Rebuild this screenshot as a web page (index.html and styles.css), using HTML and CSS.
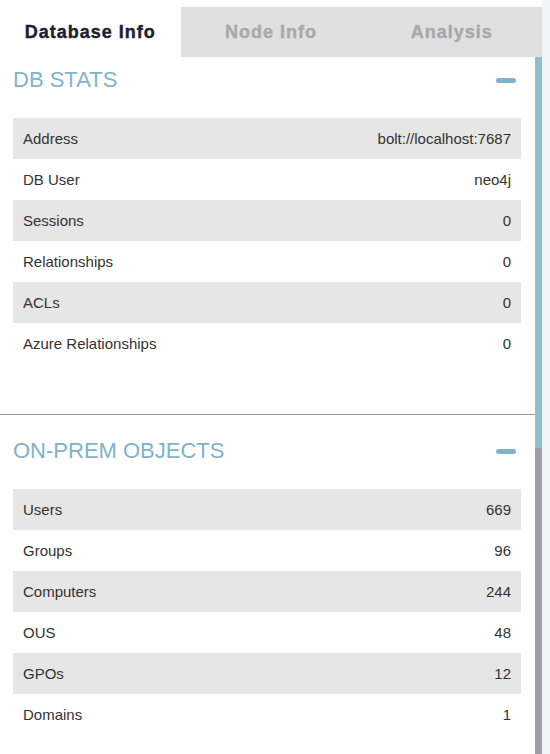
FILE: index.html
```html
<!DOCTYPE html>
<html lang="en">
<head>
    <meta charset="UTF-8">
    <meta name="viewport" content="width=device-width, initial-scale=1.0">
    <title>Database Info</title>
    <link rel="stylesheet" href="styles.css">
</head>
<body>
    <div class="panel">
        <div class="tabs">
            <div class="tab active">Database Info</div>
            <div class="tab">Node Info</div>
            <div class="tab">Analysis</div>
        </div>
        <div class="body">
            <div class="scroll-area">
                <div class="section">
                    <div class="section-header">
                        <h2>DB STATS</h2>
                        <span class="collapse"></span>
                    </div>
                    <table class="stats">
                        <tr><td>Address</td><td>bolt://localhost:7687</td></tr>
                        <tr><td>DB User</td><td>neo4j</td></tr>
                        <tr><td>Sessions</td><td>0</td></tr>
                        <tr><td>Relationships</td><td>0</td></tr>
                        <tr><td>ACLs</td><td>0</td></tr>
                        <tr><td>Azure Relationships</td><td>0</td></tr>
                    </table>
                </div>
                <div class="section">
                    <div class="section-header">
                        <h2>ON-PREM OBJECTS</h2>
                        <span class="collapse"></span>
                    </div>
                    <table class="stats">
                        <tr><td>Users</td><td>669</td></tr>
                        <tr><td>Groups</td><td>96</td></tr>
                        <tr><td>Computers</td><td>244</td></tr>
                        <tr><td>OUS</td><td>48</td></tr>
                        <tr><td>GPOs</td><td>12</td></tr>
                        <tr><td>Domains</td><td>1</td></tr>
                    </table>
                </div>
            </div>
            <div class="scrollbar">
                <div class="thumb"></div>
            </div>
        </div>
    </div>
</body>
</html>
```

FILE: styles.css
```css
html, body {
    height: 100%;
}
body {
    margin: 0;
    background-color: #f0f4fa;
    font-family: "Liberation Sans", Arial, sans-serif;
    overflow: hidden;
}
.panel {
    width: 542px;
    height: 100%;
    display: flex;
    flex-direction: column;
    background-color: white;
}
.tabs {
    display: flex;
    height: 57px;
    flex-shrink: 0;
}
.tab {
    flex: 1;
    margin-top: 7px;
    background-color: #e0e0e0;
    color: #a9a9a9;
    font-size: 18px;
    font-weight: bold;
    letter-spacing: 1px;
    -webkit-text-stroke: 0.4px currentColor;
    display: flex;
    align-items: center;
    justify-content: center;
    padding-top: 1px;
}
.tab.active {
    margin-top: 0;
    padding-top: 8px;
    background-color: white;
    color: #1c2130;
}
.body {
    flex: 1;
    display: flex;
    min-height: 0;
}
.scroll-area {
    width: 535px;
    overflow: hidden;
}
.scrollbar {
    width: 7px;
    background-color: #9d9fa4;
}
.thumb {
    height: 391px;
    background-color: #8fc0c6;
}
.section {
    padding: 0 14px 50px 13px;
    border-bottom: 1px solid #9a9a9a;
}
.section + .section {
    padding-top: 13px;
    border-bottom: none;
}
.section-header {
    display: flex;
    align-items: center;
    justify-content: space-between;
    height: 46px;
    margin-bottom: 15px;
}
.section-header h2 {
    margin: 0;
    font-size: 22px;
    font-weight: normal;
    color: #7fb3c9;
}
.collapse {
    width: 20px;
    height: 5px;
    margin-right: 5px;
    border-radius: 3px;
    background-color: #7fb3c9;
}
.stats {
    width: 100%;
    border-collapse: collapse;
    font-size: 15px;
    color: #333;
}
.stats td {
    height: 41px;
    padding: 0 10px;
}
.stats td:last-child {
    text-align: right;
}
.stats tr:nth-child(odd) {
    background-color: #e6e6e6;
}
```
